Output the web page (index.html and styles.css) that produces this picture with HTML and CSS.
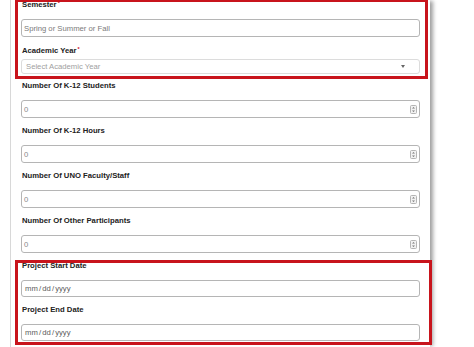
FILE: index.html
```html
<!DOCTYPE html>
<html>
<head>
<meta charset="utf-8">
<link rel="stylesheet" href="styles.css">
</head>
<body>
<div class="card">
  <div class="form">
    <div class="group first">
      <div class="label">Semester<span class="req">*</span></div>
      <div class="field"><span class="ph">Spring or Summer or Fall</span></div>
    </div>
    <div class="group tight">
      <div class="label">Academic Year<span class="req">*</span></div>
      <div class="field select"><span class="ph light">Select Academic Year</span><span class="caret"></span></div>
    </div>
    <div class="group">
      <div class="label">Number Of K-12 Students</div>
      <div class="field"><span class="val">0</span><svg class="spin" width="7" height="9" viewBox="0 0 7 9"><rect x="0.5" y="0.5" width="6" height="8" rx="1" fill="#f2f2f2" stroke="#b5b5b5"/><path d="M2 3.5 L3.5 2 L5 3.5Z M2 5.5 L3.5 7 L5 5.5Z" fill="#777"/></svg></div>
    </div>
    <div class="group">
      <div class="label">Number Of K-12 Hours</div>
      <div class="field"><span class="val">0</span><svg class="spin" width="7" height="9" viewBox="0 0 7 9"><rect x="0.5" y="0.5" width="6" height="8" rx="1" fill="#f2f2f2" stroke="#b5b5b5"/><path d="M2 3.5 L3.5 2 L5 3.5Z M2 5.5 L3.5 7 L5 5.5Z" fill="#777"/></svg></div>
    </div>
    <div class="group">
      <div class="label">Number Of UNO Faculty/Staff</div>
      <div class="field"><span class="val">0</span><svg class="spin" width="7" height="9" viewBox="0 0 7 9"><rect x="0.5" y="0.5" width="6" height="8" rx="1" fill="#f2f2f2" stroke="#b5b5b5"/><path d="M2 3.5 L3.5 2 L5 3.5Z M2 5.5 L3.5 7 L5 5.5Z" fill="#777"/></svg></div>
    </div>
    <div class="group">
      <div class="label">Number Of Other Participants</div>
      <div class="field"><span class="val">0</span><svg class="spin" width="7" height="9" viewBox="0 0 7 9"><rect x="0.5" y="0.5" width="6" height="8" rx="1" fill="#f2f2f2" stroke="#b5b5b5"/><path d="M2 3.5 L3.5 2 L5 3.5Z M2 5.5 L3.5 7 L5 5.5Z" fill="#777"/></svg></div>
    </div>
    <div class="group">
      <div class="label">Project Start Date</div>
      <div class="field date"><span class="dt">mm / dd / yyyy</span></div>
    </div>
    <div class="group">
      <div class="label">Project End Date</div>
      <div class="field date"><span class="dt">mm / dd / yyyy</span></div>
    </div>
  </div>
  <div class="mark mark-a"></div>
  <div class="mark mark-b"></div>
</div>
</body>
</html>
```

FILE: styles.css
```css
html, body {
  margin: 0;
  padding: 0;
  background: #ffffff;
  height: 347px;
  overflow: hidden;
}

body {
  font-family: "Liberation Sans", Arial, sans-serif;
}

.card {
  position: relative;
  margin-left: 10px;
  width: 399px;
  height: 347px;
  padding: 0 10px;
  border-left: 1px solid #d8d8d8;
  background: #fff;
  box-shadow: 4px 0 4px -1px rgba(0, 0, 0, 0.38);
}

.form {
  display: flex;
  flex-direction: column;
}

.group {
  display: flex;
  flex-direction: column;
  margin-top: 8px;
}

.group.first {
  margin-top: 0;
}

.group.tight {
  margin-top: 9px;
}

.group.tight + .group {
  margin-top: 7px;
}

.label {
  font-size: 7.7px;
  line-height: 10px;
  height: 10px;
  font-weight: bold;
  color: #222;
  padding-left: 1px;
  margin-bottom: 9px;
  white-space: nowrap;
}

.tight .label {
  margin-bottom: 3px;
}

.req {
  color: #d0021b;
  font-size: 5.5px;
  vertical-align: top;
  line-height: 7px;
  margin-left: 1px;
}

.field {
  box-sizing: border-box;
  height: 18px;
  border: 1px solid #b5b5b5;
  border-radius: 3px;
  display: flex;
  align-items: center;
  justify-content: space-between;
  padding: 0 3px 0 2px;
  font-size: 7.7px;
  background: #fff;
}

.field.select {
  height: 15px;
  border-color: #dcdcdc;
  padding: 0 14px 0 4px;
}

.field.date {
  height: 17px;
  padding-left: 3px;
}

.ph {
  color: #7a7a7a;
}

.ph.light {
  color: #a0a0a0;
}

.val {
  color: #888;
}

.dt {
  color: #5a5a5a;
  word-spacing: -1px;
}

.caret {
  width: 0;
  height: 0;
  border-left: 2px solid transparent;
  border-right: 2px solid transparent;
  border-top: 3px solid #666;
}

.spin {
  display: block;
  margin-right: -1px;
}

.mark {
  position: absolute;
  box-sizing: border-box;
  border: 3px solid #c8141c;
  pointer-events: none;
}

.mark-a {
  left: 4px;
  top: -1px;
  width: 413px;
  height: 80px;
}

.mark-b {
  left: 4px;
  top: 260px;
  width: 417px;
  height: 85px;
}
```
